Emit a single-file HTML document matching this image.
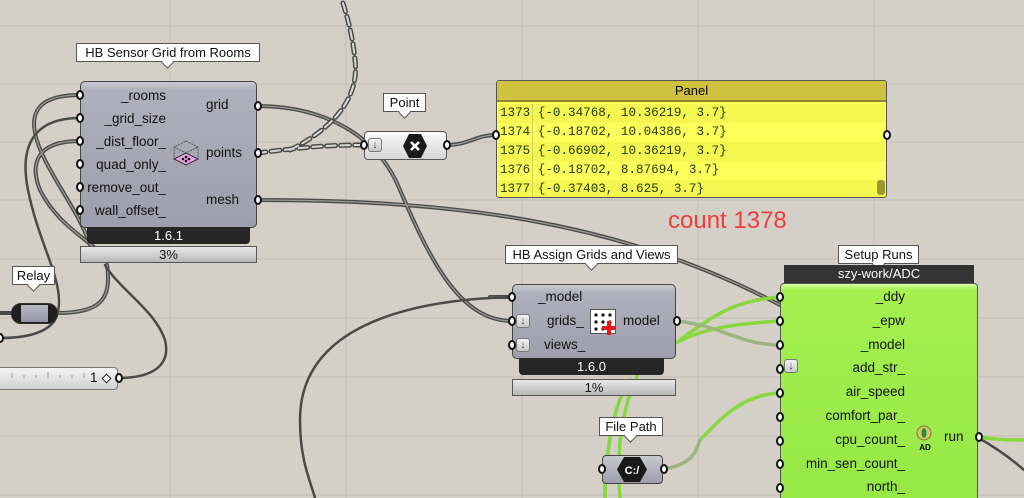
<!DOCTYPE html>
<html><head><meta charset="utf-8"><style>
*{margin:0;padding:0;box-sizing:border-box}
html,body{width:1024px;height:498px;overflow:hidden}
body{background:#d4d0c8;font-family:"Liberation Sans",sans-serif;position:relative}
.abs{position:absolute}
.tip{position:absolute;background:#fff;border:1px solid #555;font-size:13px;color:#111;text-align:center;line-height:17px;height:19px;white-space:nowrap}
.tip:after{content:"";position:absolute;left:50%;bottom:-6px;margin-left:-5px;width:8px;height:8px;background:#fff;border-right:1px solid #555;border-bottom:1px solid #555;transform:rotate(45deg)}
.comp{position:absolute;border:1px solid #444;border-radius:5px;background:linear-gradient(#c8c8d0 0,#b0b0bc 8px,#9e9eac 100%)}
.ver{position:absolute;background:#262626;color:#fff;font-size:13px;text-align:center;line-height:17px;border-radius:0 0 4px 4px}
.prog{position:absolute;background:linear-gradient(#e8e8e8,#b8b8b8);border:1px solid #555;font-size:13px;text-align:center;line-height:15px;color:#111}
.lbl{position:absolute;font-size:13.5px;color:#111;white-space:nowrap}
.r{text-align:right}
.port{position:absolute;width:8px;height:10px;border:2px solid #111;border-radius:50%;background:#fff}
.arr{position:absolute;width:14px;height:14px;border:1px solid #777;border-radius:3px;background:linear-gradient(#f4f4f4,#c8c8c8);font-size:11px;line-height:12px;text-align:center;color:#444}
.row{position:absolute;left:1px;right:1px;height:19px;font-family:"Liberation Mono",monospace;font-size:12.6px;line-height:19px;color:#1f3a00;padding-left:2px}
</style></head><body>
<svg class="abs" style="left:0;top:0" width="1024" height="498">
<g stroke="#c2beb6" stroke-width="1">
<line x1="170" y1="0" x2="170" y2="498"/><line x1="346" y1="0" x2="346" y2="498"/><line x1="522" y1="0" x2="522" y2="498"/><line x1="698" y1="0" x2="698" y2="498"/><line x1="874" y1="0" x2="874" y2="498"/>
<line x1="0" y1="26" x2="1024" y2="26"/><line x1="0" y1="84" x2="1024" y2="84"/><line x1="0" y1="142" x2="1024" y2="142"/><line x1="0" y1="200" x2="1024" y2="200"/><line x1="0" y1="259" x2="1024" y2="259"/><line x1="0" y1="318" x2="1024" y2="318"/><line x1="0" y1="377" x2="1024" y2="377"/><line x1="0" y1="436" x2="1024" y2="436"/><line x1="0" y1="495" x2="1024" y2="495"/>
</g>
<g fill="none" stroke-linecap="round">
<g stroke="#4a4a48" stroke-width="4">
<path d="M80 95 C30 95 25 120 45 160 C60 190 80 215 90 245"/>
<path d="M80 141 C35 141 30 165 40 190 C55 220 80 235 95 248"/>
<path d="M57 313 C100 313 112 300 107 265"/>
<path d="M0 313 L11 313"/>
<path d="M257 106 C330 106 380 140 400 190 C430 260 460 321 512 321"/>
<path d="M446 145 C470 145 475 135 496 135"/>
<path d="M490 297 L512 297"/>
<path d="M257 200 C450 200 620 220 780 305"/>
</g>
<g stroke="#9a9a96" stroke-width="1.3">
<path d="M80 95 C30 95 25 120 45 160 C60 190 80 215 90 245"/>
<path d="M80 141 C35 141 30 165 40 190 C55 220 80 235 95 248"/>
<path d="M57 313 C100 313 112 300 107 265"/>
<path d="M257 106 C330 106 380 140 400 190 C430 260 460 321 512 321"/>
<path d="M446 145 C470 145 475 135 496 135"/>
<path d="M490 297 L512 297"/>
<path d="M257 200 C450 200 620 220 780 305"/>
</g>
<g stroke="#4a4a48" stroke-width="2.5">
<path d="M80 118 C30 118 20 150 28 190 C40 250 70 290 55 320 C45 335 20 338 0 338"/>
<path d="M118 378 C160 378 170 360 165 340 C155 310 120 290 105 265"/>
<path d="M512 297 C400 300 300 330 300 420 C300 460 310 480 315 498"/>
<path d="M977 437 C1000 450 1015 462 1024 470"/>
</g>
<g stroke="#4a4a48" stroke-width="5" stroke-dasharray="9 5">
<path d="M257 153 C300 148 320 145 364 145"/>
<path d="M290 150 C330 130 360 100 355 60 C352 30 345 10 342 0"/>
</g>
<g stroke="#d8d8d8" stroke-width="2" stroke-dasharray="9 5">
<path d="M257 153 C300 148 320 145 364 145"/>
<path d="M290 150 C330 130 360 100 355 60 C352 30 345 10 342 0"/>
</g>
<g stroke="#86d83c" stroke-width="3.5">
<path d="M680 340 C720 310 740 300 780 297"/>
<path d="M640 370 C680 330 720 325 780 321"/>
<path d="M620 498 C615 440 625 400 640 370"/>
<path d="M605 498 C605 450 615 400 630 380"/>
<path d="M780 393 C740 395 720 420 700 440"/>
<path d="M977 437 C1000 440 1010 440 1024 440"/>
</g>
<g stroke="#9cb47e" stroke-width="3.5">
<path d="M676 321 C720 325 740 345 780 345"/>
<path d="M663 469 C690 465 695 455 700 440"/>
</g>
</g>
</svg>

<div class="tip" style="left:76px;top:43px;width:184px">HB Sensor Grid from Rooms</div>
<div class="comp" style="left:80px;top:81px;width:177px;height:147px"></div>
<div class="lbl r" style="left:80px;top:84px;width:86px;line-height:23px">_rooms<br>_grid_size<br>_dist_floor_<br>quad_only_<br>remove_out_<br>wall_offset_</div>
<div class="lbl" style="left:206px;top:97px">grid</div>
<div class="lbl" style="left:206px;top:145px">points</div>
<div class="lbl" style="left:206px;top:192px">mesh</div>
<svg class="abs" style="left:173px;top:139px" width="28" height="28"><path d="M13 2 L25 8 L25 20 L13 26 L1 20 L1 8 Z M1 8 L13 14 L25 8 M13 14 L13 26" fill="none" stroke="#555" stroke-width="1" stroke-dasharray="2 1"/><path d="M1 20 L13 14 L25 20 L13 26 Z" fill="#f0a0e0" stroke="#333"/><circle cx="10" cy="20" r="1.3"/><circle cx="16" cy="20" r="1.3"/><circle cx="13" cy="18" r="1.3"/><circle cx="13" cy="22" r="1.3"/></svg>
<div class="ver" style="left:87px;top:227px;width:163px">1.6.1</div>
<div class="prog" style="left:80px;top:246px;width:177px;height:17px">3%</div>
<div class="port" style="left:76px;top:90px"></div><div class="port" style="left:76px;top:113px"></div><div class="port" style="left:76px;top:136px"></div><div class="port" style="left:76px;top:159px"></div><div class="port" style="left:76px;top:182px"></div><div class="port" style="left:76px;top:205px"></div>
<div class="port" style="left:254px;top:101px"></div><div class="port" style="left:254px;top:148px"></div><div class="port" style="left:254px;top:195px"></div>

<div class="tip" style="left:12px;top:266px;width:43px">Relay</div>
<div class="abs" style="left:11px;top:303px;width:47px;height:21px;border-radius:10px;background:#1e1e1e;border:1px solid #333"><div class="abs" style="left:9px;top:1px;width:27px;height:17px;background:linear-gradient(#b8b8c4,#9494a4)"></div></div>
<div class="port" style="left:-4px;top:333px"></div>

<div class="abs" style="left:-5px;top:367px;width:123px;height:23px;border:1px solid #777;border-radius:4px;background:linear-gradient(#f4f4f4,#d0d0d0)"></div>
<svg class="abs" style="left:0;top:370px" width="90" height="10"><g stroke="#999"><line x1="12" y1="3" x2="12" y2="8"/><line x1="24" y1="5" x2="24" y2="8"/><line x1="36" y1="5" x2="36" y2="8"/><line x1="48" y1="2" x2="48" y2="8"/><line x1="60" y1="5" x2="60" y2="8"/><line x1="72" y1="5" x2="72" y2="8"/><line x1="84" y1="3" x2="84" y2="8"/></g></svg>
<div class="lbl" style="left:90px;top:370px">1</div>
<div class="abs" style="left:103px;top:375px;width:7px;height:7px;border:1.5px solid #222;transform:rotate(45deg);background:#fff"></div>
<div class="port" style="left:115px;top:373px"></div>

<div class="tip" style="left:383px;top:93px;width:43px">Point</div>
<div class="abs" style="left:364px;top:131px;width:83px;height:29px;border:1px solid #555;border-radius:4px;background:linear-gradient(#fafafa,#d6d6d6)"></div>
<div class="arr" style="left:368px;top:138px">↓</div>
<svg class="abs" style="left:402px;top:133px" width="26" height="26"><path d="M7 1 L19 1 L25 13 L19 25 L7 25 L1 13 Z" fill="#1a1a1a"/><path d="M9 9 L17 17 M17 9 L9 17" stroke="#fff" stroke-width="2.5"/></svg>
<div class="port" style="left:360px;top:140px"></div><div class="port" style="left:443px;top:140px"></div>

<div class="abs" style="left:496px;top:80px;width:391px;height:118px;border:1px solid #555;border-radius:3px;background:#ffff5c;overflow:hidden">
<div class="abs" style="left:0;top:0;right:0;height:21px;background:#cfc23e;border-bottom:2px solid #8a8430;text-align:center;font-size:13px;line-height:19px">Panel</div>
<div class="row" style="top:23px;background:#f6f650">1373 {-0.34768, 10.36219, 3.7}</div>
<div class="row" style="top:42px;background:#ffff5c">1374 {-0.18702, 10.04386, 3.7}</div>
<div class="row" style="top:61px;background:#f6f650">1375 {-0.66902, 10.36219, 3.7}</div>
<div class="row" style="top:80px;background:#ffff5c">1376 {-0.18702, 8.87694, 3.7}</div>
<div class="row" style="top:99px;background:#f6f650">1377 {-0.37403, 8.625, 3.7}</div>
<div class="abs" style="left:35px;top:23px;width:1px;height:95px;background:#d4d060"></div>
<div class="abs" style="left:380px;top:99px;width:8px;height:15px;border-radius:3px;background:#9a9630"></div>
</div>
<div class="port" style="left:492px;top:130px"></div><div class="port" style="left:883px;top:130px"></div>

<div class="lbl" style="left:668px;top:207px;font-size:24px;color:#f03c3c">count 1378</div>

<div class="tip" style="left:505px;top:245px;width:173px">HB Assign Grids and Views</div>
<div class="comp" style="left:512px;top:284px;width:164px;height:75px"></div>
<div class="lbl" style="left:538px;top:289px">_model</div>
<div class="lbl" style="left:547px;top:313px">grids_</div>
<div class="lbl" style="left:544px;top:337px">views_</div>
<div class="arr" style="left:516px;top:314px">↓</div><div class="arr" style="left:516px;top:338px">↓</div>
<div class="lbl" style="left:623px;top:313px">model</div>
<svg class="abs" style="left:590px;top:309px" width="28" height="28"><rect x="0.5" y="0.5" width="25" height="24" fill="#fff" stroke="#555"/><g fill="#111"><circle cx="6" cy="6" r="1.6"/><circle cx="13" cy="6" r="1.6"/><circle cx="20" cy="6" r="1.6"/><circle cx="6" cy="13" r="1.6"/><circle cx="13" cy="13" r="1.6"/><circle cx="20" cy="13" r="1.6"/><circle cx="6" cy="20" r="1.6"/><circle cx="13" cy="20" r="1.6"/></g><path d="M19 12 V26 M12 19 H26" stroke="#e81818" stroke-width="4"/></svg>
<div class="ver" style="left:519px;top:358px;width:145px">1.6.0</div>
<div class="prog" style="left:512px;top:379px;width:164px;height:17px">1%</div>
<div class="port" style="left:508px;top:292px"></div><div class="port" style="left:508px;top:316px"></div><div class="port" style="left:508px;top:340px"></div><div class="port" style="left:673px;top:316px"></div>

<div class="tip" style="left:599px;top:417px;width:64px">File Path</div>
<div class="abs" style="left:602px;top:455px;width:61px;height:29px;border:1px solid #444;border-radius:4px;background:linear-gradient(#c8c8d0,#9e9eac)"></div>
<svg class="abs" style="left:616px;top:456px" width="32" height="27"><path d="M8 1 L24 1 L31 13.5 L24 26 L8 26 L1 13.5 Z" fill="#1a1a1a"/><text x="16" y="18" text-anchor="middle" font-size="11" font-weight="bold" fill="#fff" font-family="Liberation Sans">C:/</text></svg>
<div class="port" style="left:598px;top:464px"></div><div class="port" style="left:660px;top:464px"></div>

<div class="tip" style="left:838px;top:245px;width:81px">Setup Runs</div>
<div class="abs" style="left:784px;top:265px;width:190px;height:19px;background:#333;color:#fff;font-size:13px;text-align:center;line-height:18px">szy-work/ADC</div>
<div class="abs" style="left:780px;top:283px;width:198px;height:220px;border:1px solid #555;border-radius:4px;background:linear-gradient(#d8ffa8 0,#a4f050 6px,#96e846 100%)"></div>
<div class="lbl r" style="left:780px;top:285px;width:125px;line-height:23.8px">_ddy<br>_epw<br>_model<br>add_str_<br>air_speed<br>comfort_par_<br>cpu_count_<br>min_sen_count_<br>north_</div>
<div class="arr" style="left:784px;top:359px">↓</div>
<div class="lbl" style="left:944px;top:429px">run</div>
<svg class="abs" style="left:912px;top:424px" width="26" height="28"><circle cx="12" cy="9" r="7" fill="#d8c860" stroke="#7a7a30"/><ellipse cx="12" cy="9" rx="2.5" ry="5" fill="#2a8a4a"/><text x="13" y="26" text-anchor="middle" font-size="8" font-weight="bold" font-family="Liberation Sans">AD</text></svg>
<div class="port" style="left:776px;top:292px"></div><div class="port" style="left:776px;top:316px"></div><div class="port" style="left:776px;top:340px"></div><div class="port" style="left:776px;top:364px"></div><div class="port" style="left:776px;top:388px"></div><div class="port" style="left:776px;top:412px"></div><div class="port" style="left:776px;top:436px"></div><div class="port" style="left:776px;top:459px"></div><div class="port" style="left:776px;top:483px"></div>
<div class="port" style="left:975px;top:432px"></div>
</body></html>
